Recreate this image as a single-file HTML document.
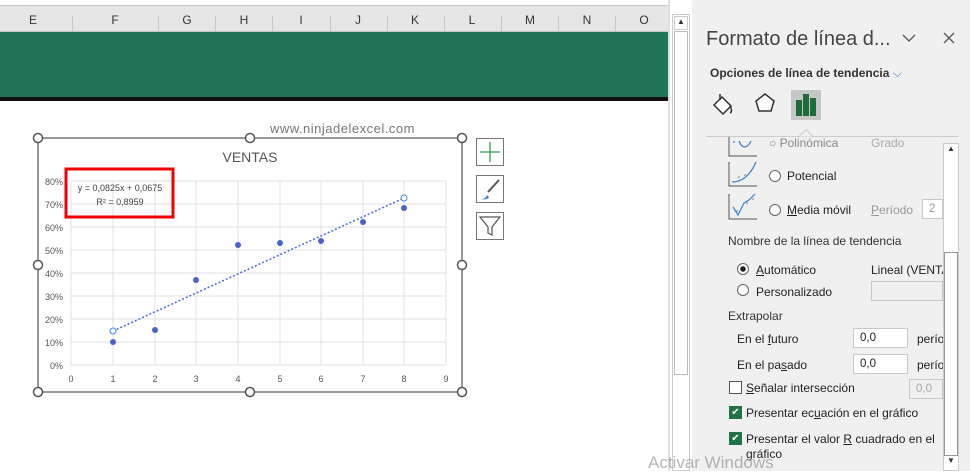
<!DOCTYPE html><html><head><style>
*{margin:0;padding:0;box-sizing:border-box}
body{width:970px;height:471px;overflow:hidden;background:#fff;font-family:"Liberation Sans",sans-serif;position:relative}
.a{position:absolute}
.hdr{left:0;top:5px;width:668px;height:27px;background:#e6e6e6;border-top:1px solid #c8c8c8;border-bottom:1px solid #c8c8c8}
.col{position:absolute;top:7px;font-size:12px;color:#333;transform:translateX(-50%)}
.sep{position:absolute;top:10px;width:1px;height:16px;background:#c8c8c8}
.p{font-size:12px;color:#222}
.rad{width:12px;height:12px;border:1px solid #666;border-radius:50%;background:#fff}
.inp{background:#fff;border:1px solid #c8c8c8;height:20px;font-size:11.5px;padding:3px 6px;color:#222}
.chk{width:13px;height:13px;background:#217346;color:#fff;font-size:10px;line-height:13px;text-align:center}
</style></head><body>
<div class="a hdr">
<span class="col" style="left:33px">E</span><div class="sep" style="left:72px"></div>
<span class="col" style="left:115px">F</span><div class="sep" style="left:158px"></div>
<span class="col" style="left:187px">G</span><div class="sep" style="left:215px"></div>
<span class="col" style="left:244px">H</span><div class="sep" style="left:272px"></div>
<span class="col" style="left:301px">I</span><div class="sep" style="left:330px"></div>
<span class="col" style="left:358px">J</span><div class="sep" style="left:387px"></div>
<span class="col" style="left:415px">K</span><div class="sep" style="left:444px"></div>
<span class="col" style="left:472px">L</span><div class="sep" style="left:501px"></div>
<span class="col" style="left:530px">M</span><div class="sep" style="left:558px"></div>
<span class="col" style="left:587px">N</span><div class="sep" style="left:615px"></div>
<span class="col" style="left:644px">O</span>
</div>
<div class="a" style="left:0;top:32px;width:668px;height:65px;background:#217358"></div>
<div class="a" style="left:0;top:97px;width:668px;height:4px;background:#111"></div>
<div class="a" style="left:668px;top:0;width:2px;height:471px;background:#e0e0e0"></div>
<div class="a" style="left:270px;top:121px;font-size:13px;color:#777;letter-spacing:0.5px">www.ninjadelexcel.com</div>
<svg class="a" style="left:0;top:0" width="670" height="471">
<rect x="38" y="138" width="424" height="254" fill="#fff" stroke="#777" stroke-width="1.5"/>
<g stroke="#e0e0e0" stroke-width="1">
<line x1="71" y1="181" x2="446" y2="181"/><line x1="71" y1="204" x2="446" y2="204"/><line x1="71" y1="227" x2="446" y2="227"/><line x1="71" y1="250" x2="446" y2="250"/><line x1="71" y1="273" x2="446" y2="273"/><line x1="71" y1="296" x2="446" y2="296"/><line x1="71" y1="319" x2="446" y2="319"/><line x1="71" y1="342" x2="446" y2="342"/><line x1="71" y1="365" x2="446" y2="365"/>
<line x1="71" y1="181" x2="71" y2="365"/><line x1="113" y1="181" x2="113" y2="365"/><line x1="155" y1="181" x2="155" y2="365"/><line x1="196" y1="181" x2="196" y2="365"/><line x1="238" y1="181" x2="238" y2="365"/><line x1="280" y1="181" x2="280" y2="365"/><line x1="321" y1="181" x2="321" y2="365"/><line x1="363" y1="181" x2="363" y2="365"/><line x1="404" y1="181" x2="404" y2="365"/><line x1="446" y1="181" x2="446" y2="365"/>
</g>
<g font-size="9" fill="#555" text-anchor="end" font-family="Liberation Sans">
<text x="63" y="185">80%</text><text x="63" y="208">70%</text><text x="63" y="231">60%</text><text x="63" y="254">50%</text><text x="63" y="277">40%</text><text x="63" y="300">30%</text><text x="63" y="323">20%</text><text x="63" y="346">10%</text><text x="63" y="369">0%</text>
</g>
<g font-size="9" fill="#555" text-anchor="middle" font-family="Liberation Sans">
<text x="71" y="382">0</text><text x="113" y="382">1</text><text x="155" y="382">2</text><text x="196" y="382">3</text><text x="238" y="382">4</text><text x="280" y="382">5</text><text x="321" y="382">6</text><text x="363" y="382">7</text><text x="404" y="382">8</text><text x="446" y="382">9</text>
</g>
<text x="250" y="162" font-size="14" fill="#555" text-anchor="middle" font-family="Liberation Sans">VENTAS</text>
<line x1="113" y1="331" x2="404" y2="198" stroke="#4a6bd0" stroke-width="1.5" stroke-dasharray="2,2"/>
<g fill="#4a63d0"><circle cx="113" cy="342" r="3"/><circle cx="155" cy="330" r="3"/><circle cx="196" cy="280" r="3"/><circle cx="238" cy="245" r="3"/><circle cx="280" cy="243" r="3"/><circle cx="321" cy="241" r="3"/><circle cx="363" cy="222" r="3"/><circle cx="404" cy="208" r="3"/></g>
<circle cx="113" cy="331" r="3" fill="#fff" stroke="#3b8ee0"/><circle cx="404" cy="198" r="3" fill="#fff" stroke="#3b8ee0"/>
<text x="120" y="191" font-size="9" fill="#444" text-anchor="middle" font-family="Liberation Sans">y = 0,0825x + 0,0675</text>
<text x="120" y="205" font-size="9" fill="#444" text-anchor="middle" font-family="Liberation Sans">R² = 0,8959</text>
<rect x="66" y="169" width="107" height="48" fill="none" stroke="#e00" stroke-width="3"/>
<g fill="#fff" stroke="#555" stroke-width="1.5">
<circle cx="38" cy="138" r="4.5"/><circle cx="250" cy="138" r="4.5"/><circle cx="462" cy="138" r="4.5"/>
<circle cx="38" cy="265" r="4.5"/><circle cx="462" cy="265" r="4.5"/>
<circle cx="38" cy="392" r="4.5"/><circle cx="250" cy="392" r="4.5"/><circle cx="462" cy="392" r="4.5"/>
</g>
<g fill="#fff" stroke="#777"><rect x="476.5" y="138.5" width="27" height="27"/><rect x="476.5" y="175.5" width="27" height="27"/><rect x="476.5" y="212.5" width="27" height="27"/></g>
<path d="M490 142v20M480 152h20" stroke="#3a9a4a" stroke-width="1.3"/>
<path d="M499 180l-11 12" stroke="#555" stroke-width="2"/><path d="M481 199c3 0 5-1 6-4l2 2c-1 2-4 3-8 2z" fill="#3a7fd0"/>
<path d="M480 217h20l-8 10v8l-4-2v-6z" fill="none" stroke="#555" stroke-width="1.2"/>
</svg>
<div class="a" style="left:672px;top:14px;width:18px;height:457px;background:#fff;border:1px solid #ccc"></div>
<div class="a" style="left:674px;top:16px;width:14px;height:14px;font-size:8px;text-align:center;color:#333;border:1px solid #ccc">▲</div>
<div class="a" style="left:674px;top:31px;width:14px;height:344px;border:1px solid #bbb;background:#fff"></div>
<div class="a" style="left:692px;top:0;width:278px;height:471px;background:#f0f0f0"></div>
<div class="a" style="left:706px;top:28px;font-size:20px;color:#444">Formato de línea d...</div>
<svg class="a" style="left:900px;top:30px" width="60" height="20"><path d="M3 5l6 6 6-6" fill="none" stroke="#555" stroke-width="1.3"/><path d="M44 3l10 10M54 3l-10 10" stroke="#555" stroke-width="1.3"/></svg>
<div class="a" style="left:710px;top:66px;font-size:12px;font-weight:bold;color:#333">Opciones de línea de tendencia <span style="color:#3a7fd0;font-weight:normal">⌵</span></div>
<svg class="a" style="left:706px;top:88px" width="260" height="50">
<path d="M8 17l8-8 9 9-8 8z" fill="#fff" stroke="#333" stroke-width="1.5"/><path d="M14 6v6M24 18c2 3 2 6 0 7" stroke="#333" stroke-width="1.5" fill="none"/>
<path d="M59 6l9 7-3 10h-12l-3-10z" fill="#fff" stroke="#333" stroke-width="1.5"/>
<rect x="85" y="2" width="30" height="30" fill="#c6c6c6"/>
<rect x="90" y="12" width="6" height="16" fill="#1e6b3b"/><rect x="97" y="6" width="6" height="22" fill="#1e6b3b"/><rect x="104" y="10" width="6" height="18" fill="#1e6b3b"/>
<line x1="0" y1="48.5" x2="252" y2="48.5" stroke="#ccc"/>
<path d="M93 48.5l7-7 7 7" fill="#f0f0f0" stroke="#ccc"/>
</svg>
<svg class="a" style="left:727px;top:137px" width="34" height="88">
<g fill="none" stroke="#555"><path d="M2 0v19h28M2 25v24h28M2 57v25h28"/></g>
<path d="M6 5l2 0M12 4c3 8 8 8 12 0" stroke="#3a7fd0" fill="none" stroke-width="1.2"/>
<path d="M5 45c10 0 18-6 24-20" stroke="#3a7fd0" fill="none" stroke-width="1.2"/>
<g fill="#777"><circle cx="12" cy="40" r=".8"/><circle cx="18" cy="38" r=".8"/><circle cx="24" cy="34" r=".8"/><circle cx="10" cy="74" r=".8"/><circle cx="20" cy="66" r=".8"/><circle cx="26" cy="62" r=".8"/></g>
<path d="M6 70l5 8 6-12 5-3 6-6" stroke="#3a7fd0" fill="none" stroke-width="1.2"/>
</svg>
<div class="a p" style="left:769px;top:136px;color:#888">○ Polinómica</div>
<div class="a" style="left:871px;top:136px;font-size:12px;color:#aaa">Grado</div>
<div class="a rad" style="left:769px;top:170px"></div><div class="a p" style="left:787px;top:169px">Potencial</div>
<div class="a rad" style="left:769px;top:204px"></div><div class="a p" style="left:787px;top:203px"><u>M</u>edia móvil</div>
<div class="a" style="left:871px;top:203px;font-size:12px;color:#999"><u>P</u>eríodo</div>
<div class="a inp" style="left:922px;top:199px;width:21px;color:#999">2</div>
<div class="a p" style="left:728px;top:234px;color:#333">Nombre de la línea de tendencia</div>
<div class="a rad" style="left:737px;top:263px;background:radial-gradient(circle,#222 2.5px,#fff 3px)"></div><div class="a p" style="left:756px;top:263px"><u>A</u>utomático</div>
<div class="a p" style="left:871px;top:263px">Lineal (VENTA</div>
<div class="a rad" style="left:737px;top:284px"></div><div class="a p" style="left:756px;top:285px">Personalizado</div>
<div class="a inp" style="left:871px;top:281px;width:72px;background:#f0f0f0"></div>
<div class="a p" style="left:728px;top:309px;color:#333">Extrapolar</div>
<div class="a p" style="left:737px;top:332px">En el <u>f</u>uturo</div>
<div class="a inp" style="left:853px;top:328px;width:55px">0,0</div><div class="a p" style="left:917px;top:332px">perío</div>
<div class="a p" style="left:737px;top:358px">En el pa<u>s</u>ado</div>
<div class="a inp" style="left:853px;top:354px;width:55px">0,0</div><div class="a p" style="left:917px;top:358px">perío</div>
<div class="a" style="left:729px;top:381px;width:13px;height:13px;border:1px solid #555;background:#fff"></div>
<div class="a p" style="left:746px;top:381px"><u>S</u>eñalar intersección</div>
<div class="a inp" style="left:909px;top:379px;width:34px;color:#aaa;background:#f0f0f0">0,0</div>
<div class="a chk" style="left:729px;top:406px">✔</div><div class="a p" style="left:746px;top:406px">Presentar ec<u>u</u>ación en el gráfico</div>
<div class="a chk" style="left:729px;top:432px">✔</div><div class="a p" style="left:746px;top:432px;line-height:15px">Presentar el valor <u>R</u> cuadrado en el<br>gráfico</div>
<div class="a" style="left:943px;top:143px;width:16px;height:328px;background:#fff;border:1px solid #ccc"></div>
<div class="a" style="left:944px;top:144px;width:14px;height:14px;font-size:8px;text-align:center;color:#333">▲</div>
<div class="a" style="left:944px;top:252px;width:14px;height:204px;border:1px solid #999;background:#fff"></div>
<div class="a" style="left:944px;top:456px;width:14px;height:14px;font-size:8px;text-align:center;color:#333">▼</div>
<div class="a" style="left:648px;top:453px;font-size:17px;color:rgba(150,150,150,0.7)">Activar Windows</div>
</body></html>
